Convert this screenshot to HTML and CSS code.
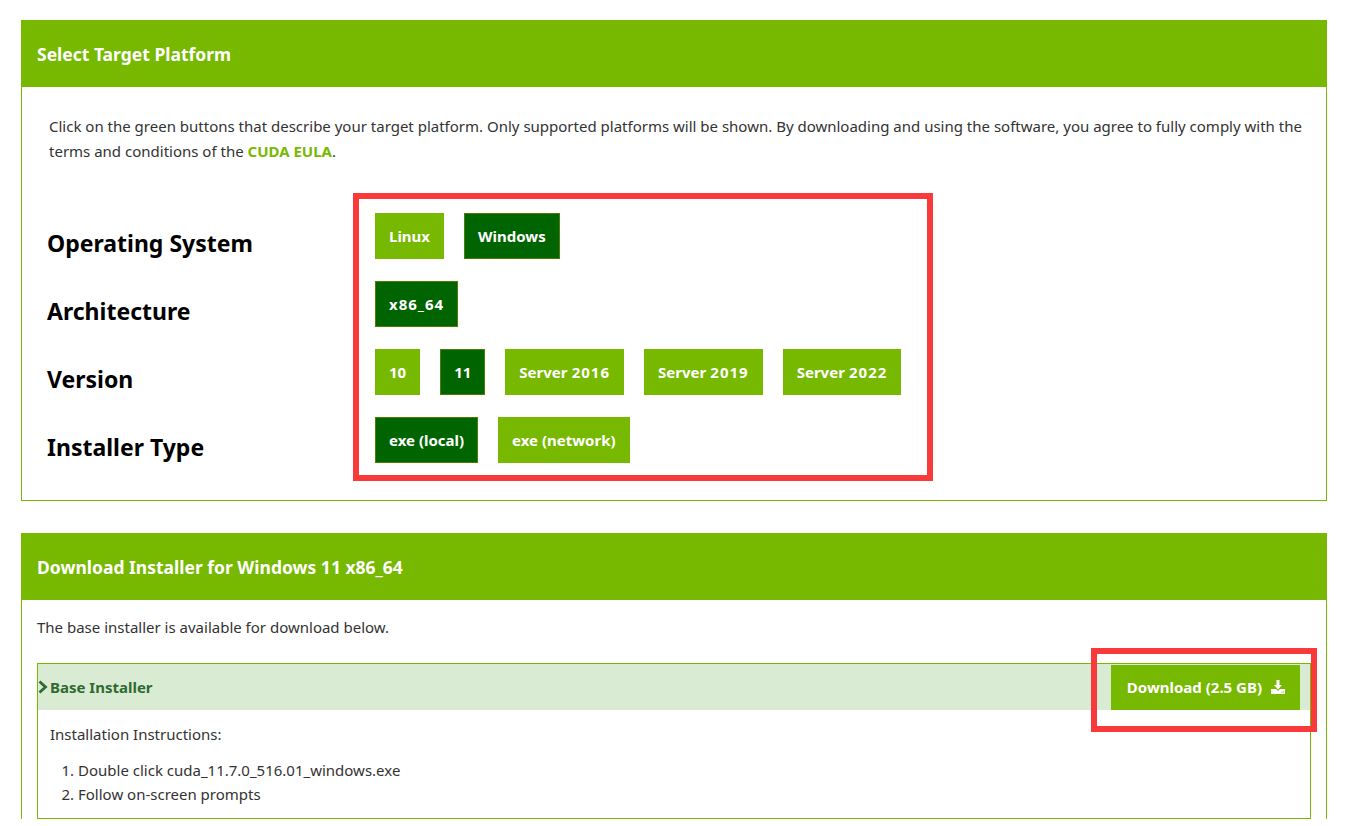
FILE: index.html
```html
<!DOCTYPE html>
<html lang="en">
<head>
    <meta charset="UTF-8">
    <title>CUDA Toolkit Downloads</title>
    <link rel="stylesheet" href="styles.css">
</head>
<body>
    <!-- platform selector -->
    <div class="panel">
        <div class="panel-head">Select Target Platform</div>
        <div class="panel-body select-body">
            <p class="intro">Click on the green buttons that describe your target platform. Only supported platforms will be shown. By downloading and using the software, you agree to fully comply with the terms and conditions of the <a href="#" class="eula">CUDA EULA</a>.</p>
            <div class="selector">
                <div class="labels">
                    <div class="row-label">Operating System</div>
                    <div class="row-label">Architecture</div>
                    <div class="row-label">Version</div>
                    <div class="row-label">Installer Type</div>
                </div>
                <div class="choices mark">
                    <div class="choice-row">
                        <span class="opt">Linux</span>
                        <span class="opt active">Windows</span>
                    </div>
                    <div class="choice-row">
                        <span class="opt active num">x86_64</span>
                    </div>
                    <div class="choice-row">
                        <span class="opt">10</span>
                        <span class="opt active">11</span>
                        <span class="opt">Server <span class="num">2016</span></span>
                        <span class="opt">Server <span class="num">2019</span></span>
                        <span class="opt">Server <span class="num">2022</span></span>
                    </div>
                    <div class="choice-row">
                        <span class="opt active">exe (local)</span>
                        <span class="opt">exe (network)</span>
                    </div>
                </div>
            </div>
        </div>
    </div>

    <!-- download section -->
    <div class="panel download-panel">
        <div class="panel-head">Download Installer for Windows 11 x86_64</div>
        <div class="panel-body dl-body">
            <p class="dl-note">The base installer is available for download below.</p>
            <div class="installer">
                <div class="installer-head">
                    <span class="installer-title">
                        <svg class="chevron" width="10" height="14" viewBox="0 0 10 14"><path d="M1.5 1.5 L7.5 7 L1.5 12.5" fill="none" stroke="#2f6a31" stroke-width="2.8"/></svg>
                        Base Installer
                    </span>
                    <a href="#" class="dl-btn">
                        Download (2.5 GB)
                        <svg class="dl-icon" width="14" height="14" viewBox="0 0 14 14"><path d="M5.5 0 H8.5 V5 H11 L7 9.5 L3 5 H5.5 Z" fill="#fff"/><path d="M0 9 H5 L7 11 L9 9 H14 V14 H0 Z" fill="#fff"/><rect x="10.5" y="11.5" width="1" height="1" fill="#76b900"/><rect x="12" y="11.5" width="1" height="1" fill="#76b900"/></svg>
                        <span class="dl-mark"></span>
                    </a>
                </div>
                <div class="installer-body">
                    <p class="steps-title">Installation Instructions:</p>
                    <ol class="steps">
                        <li>Double click cuda_11.7.0_516.01_windows.exe</li>
                        <li>Follow on-screen prompts</li>
                    </ol>
                </div>
            </div>
        </div>
    </div>
</body>
</html>
```

FILE: styles.css
```css
body {
    margin: 0;
    padding: 20px 20px 0 21px;
    font-family: "Noto Sans", "Liberation Sans", Arial, sans-serif;
    font-size: 15px;
    color: #333;
    background: #fff;
}

.panel {
    width: 1306px;
    box-sizing: border-box;
    border: 1px solid #76b900;
}

.panel-head {
    height: 67px;
    margin: -1px -1px 0;
    padding: 0 16px;
    display: flex;
    align-items: center;
    background-color: #76b900;
    color: #fff;
    font-size: 17.5px;
    font-weight: bold;
}

/* target platform */
.select-body {
    padding: 27px 18px 19px 27px;
}

.intro {
    margin: 0;
    line-height: 25px;
}

.eula {
    color: #76b900;
    font-weight: bold;
    text-decoration: none;
}

.selector {
    display: flex;
    margin-top: 29px;
}

.labels {
    width: 306px;
    padding-top: 27px;
    margin-left: -2px;
    display: flex;
    flex-direction: column;
    gap: 22px;
}

.row-label {
    height: 46px;
    line-height: 46px;
    font-size: 23px;
    font-weight: bold;
    color: #000;
}

.choices {
    width: 580px;
    box-sizing: border-box;
    padding: 14px 16px 12px;
    display: flex;
    flex-direction: column;
    gap: 22px;
}

.mark {
    border: 6px solid #fa3a3a;
}

.choice-row {
    display: flex;
    gap: 20px;
}

.opt {
    height: 46px;
    box-sizing: border-box;
    padding: 0 13px;
    display: flex;
    align-items: center;
    gap: 0.28em;
    background-color: #76b900;
    border: 1px solid #76b900;
    color: #fff;
    font-size: 15px;
    font-weight: bold;
    cursor: pointer;
}

.opt .num,
.opt.num {
    letter-spacing: 1px;
}

.opt.active {
    background-color: #006400;
    border-color: #4f7d00;
}

/* download */
.download-panel {
    margin-top: 32px;
    border-bottom: none;
}

.dl-body {
    padding: 15px 15px 0;
}

.dl-note {
    margin: 0 0 24px;
    line-height: 24px;
}

.installer {
    border: 1px solid #76b900;
}

.installer-head {
    height: 46px;
    display: flex;
    align-items: center;
    justify-content: space-between;
    background-color: #d9ebd2;
}

.installer-title {
    display: flex;
    align-items: center;
    gap: 2px;
    color: #2f6a31;
    font-weight: bold;
}

.dl-btn {
    position: relative;
    height: 45px;
    margin-right: 10px;
    padding: 0 15px 0 16px;
    display: flex;
    align-items: center;
    gap: 9px;
    background-color: #76b900;
    color: #fff;
    font-weight: bold;
    text-decoration: none;
}

.dl-mark {
    position: absolute;
    top: -17px;
    left: -20px;
    right: -17px;
    bottom: -22px;
    border: 6px solid #fa3a3a;
}

.installer-body {
    padding: 14px 12px 12px;
}

.steps-title {
    margin: 0;
    line-height: 20px;
}

.steps {
    margin: 14px 0 0;
    padding-left: 28px;
    line-height: 24px;
}
```
